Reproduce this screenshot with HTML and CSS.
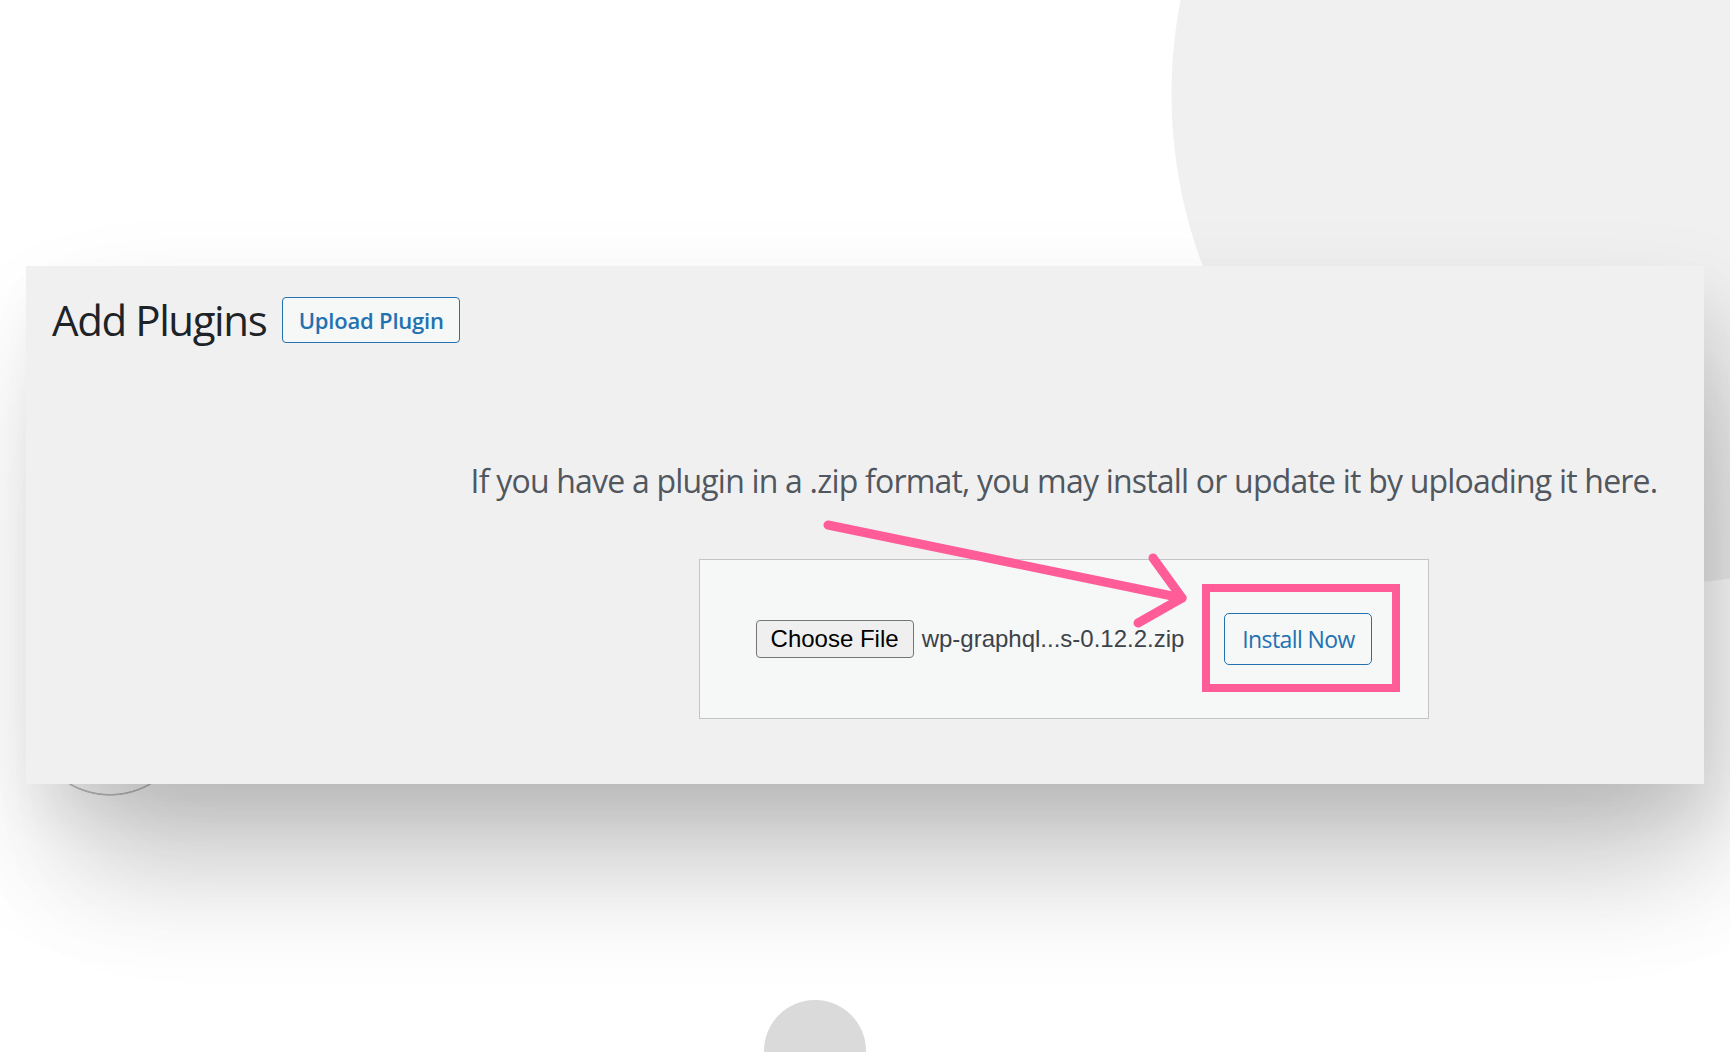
FILE: index.html
```html
<!DOCTYPE html>
<html lang="en">
<head>
<meta charset="utf-8">
<title>Add Plugins</title>
<link rel="stylesheet" href="styles.css">
</head>
<body>
<div class="stage">
  <main class="panel">
    <header class="wrap-head">
      <h1 class="page-title">Add Plugins</h1>
      <a class="title-action">Upload Plugin</a>
    </header>
    <section class="upload-plugin">
      <p class="install-help">If you have a plugin in a .zip format, you may install or update it by uploading it here.</p>
      <form class="upload-form">
        <span class="file-btn">Choose File</span>
        <span class="file-name">wp-graphql...s-0.12.2.zip</span>
        <span class="install-wrap">
          <button type="button" class="install-btn">Install Now</button>
          <span class="highlight"></span>
        </span>
      </form>
    </section>
    <svg class="arrow" width="1678" height="518" viewBox="0 0 1678 518" aria-hidden="true">
      <path d="M802 259 L1156 332" fill="none" stroke="#ff5c98" stroke-width="9" stroke-linecap="round"/>
      <path d="M1127 292 L1156 332 L1112 357" fill="none" stroke="#ff5c98" stroke-width="9" stroke-linecap="round" stroke-linejoin="round"/>
    </svg>
  </main>
</div>
</body>
</html>
```
FILE: styles.css
```css
html, body {
  margin: 0;
  padding: 0;
}
body {
  width: 1730px;
  height: 1052px;
  overflow: hidden;
  font-family: "Open Sans", "Noto Sans", sans-serif;
  background:
    radial-gradient(circle at 1661px 94px, #f0f0f0 489px, rgba(240, 240, 240, 0) 490px),
    radial-gradient(circle at 815px 1051px, #dadada 50.5px, rgba(218, 218, 218, 0) 51.5px),
    radial-gradient(circle at 110px 715px, rgba(194, 194, 194, 0) 78.5px, #c2c2c2 79.2px, #c2c2c2 80.3px, rgba(194, 194, 194, 0) 81px),
    #ffffff;
}
.stage {
  padding: 266px 26px 0 26px;
}
.panel {
  position: relative;
  width: 1678px;
  height: 518px;
  box-sizing: border-box;
  background: #f0f0f1;
  padding: 31px 26px 0 26px;
  box-shadow:
    24px 70px 120px -10px rgba(0, 0, 0, 0.2),
    20px 130px 120px -30px rgba(0, 0, 0, 0.07),
    10px 30px 50px rgba(0, 0, 0, 0.05);
}
.wrap-head {
  display: flex;
  align-items: center;
}
.page-title {
  margin: 0;
  font-size: 42px;
  font-weight: 400;
  line-height: 46px;
  color: #1d2327;
  letter-spacing: -1.4px;
}
.title-action {
  margin-left: 16px;
  height: 46px;
  box-sizing: border-box;
  width: 178px;
  display: flex;
  align-items: center;
  justify-content: center;
  border: 1.5px solid #2271b1;
  border-radius: 4px;
  background: #f6f7f7;
  color: #2271b1;
  font-size: 22px;
  font-weight: 600;
  letter-spacing: -0.2px;
}
.upload-plugin {
  margin-left: 398px;
}
.install-help {
  margin: 116px 0 56px 0;
  text-align: center;
  white-space: nowrap;
  font-size: 32px;
  line-height: 44px;
  color: #50575e;
  letter-spacing: -0.8px;
}
.upload-form {
  width: 730px;
  height: 160px;
  margin: 0 auto;
  box-sizing: border-box;
  border: 1px solid #c3c4c7;
  background: #f6f7f7;
  display: flex;
  align-items: center;
  justify-content: center;
}
.file-btn {
  height: 38px;
  box-sizing: border-box;
  padding: 0 14px;
  display: inline-flex;
  align-items: center;
  border: 1px solid #767676;
  border-radius: 4px;
  background: #efefef;
  color: #000;
  font-family: "Liberation Sans", Arial, sans-serif;
  font-size: 24px;
}
.file-name {
  margin-left: 8px;
  font-family: "Liberation Sans", Arial, sans-serif;
  font-size: 24px;
  color: #3c434a;
}
.install-wrap {
  position: relative;
  margin-left: 40px;
  display: inline-flex;
}
.install-btn {
  width: 148px;
  height: 52px;
  box-sizing: border-box;
  padding: 0;
  border: 1.5px solid #2271b1;
  border-radius: 5px;
  background: #f6f7f7;
  color: #2271b1;
  font-family: "Open Sans", "Noto Sans", sans-serif;
  font-size: 23px;
  letter-spacing: -0.6px;
}
.highlight {
  position: absolute;
  left: -22px;
  top: -29px;
  width: 198px;
  height: 108px;
  box-sizing: border-box;
  border: 8px solid #ff5c98;
}
.arrow {
  position: absolute;
  left: 0;
  top: 0;
  pointer-events: none;
  overflow: visible;
}
```
